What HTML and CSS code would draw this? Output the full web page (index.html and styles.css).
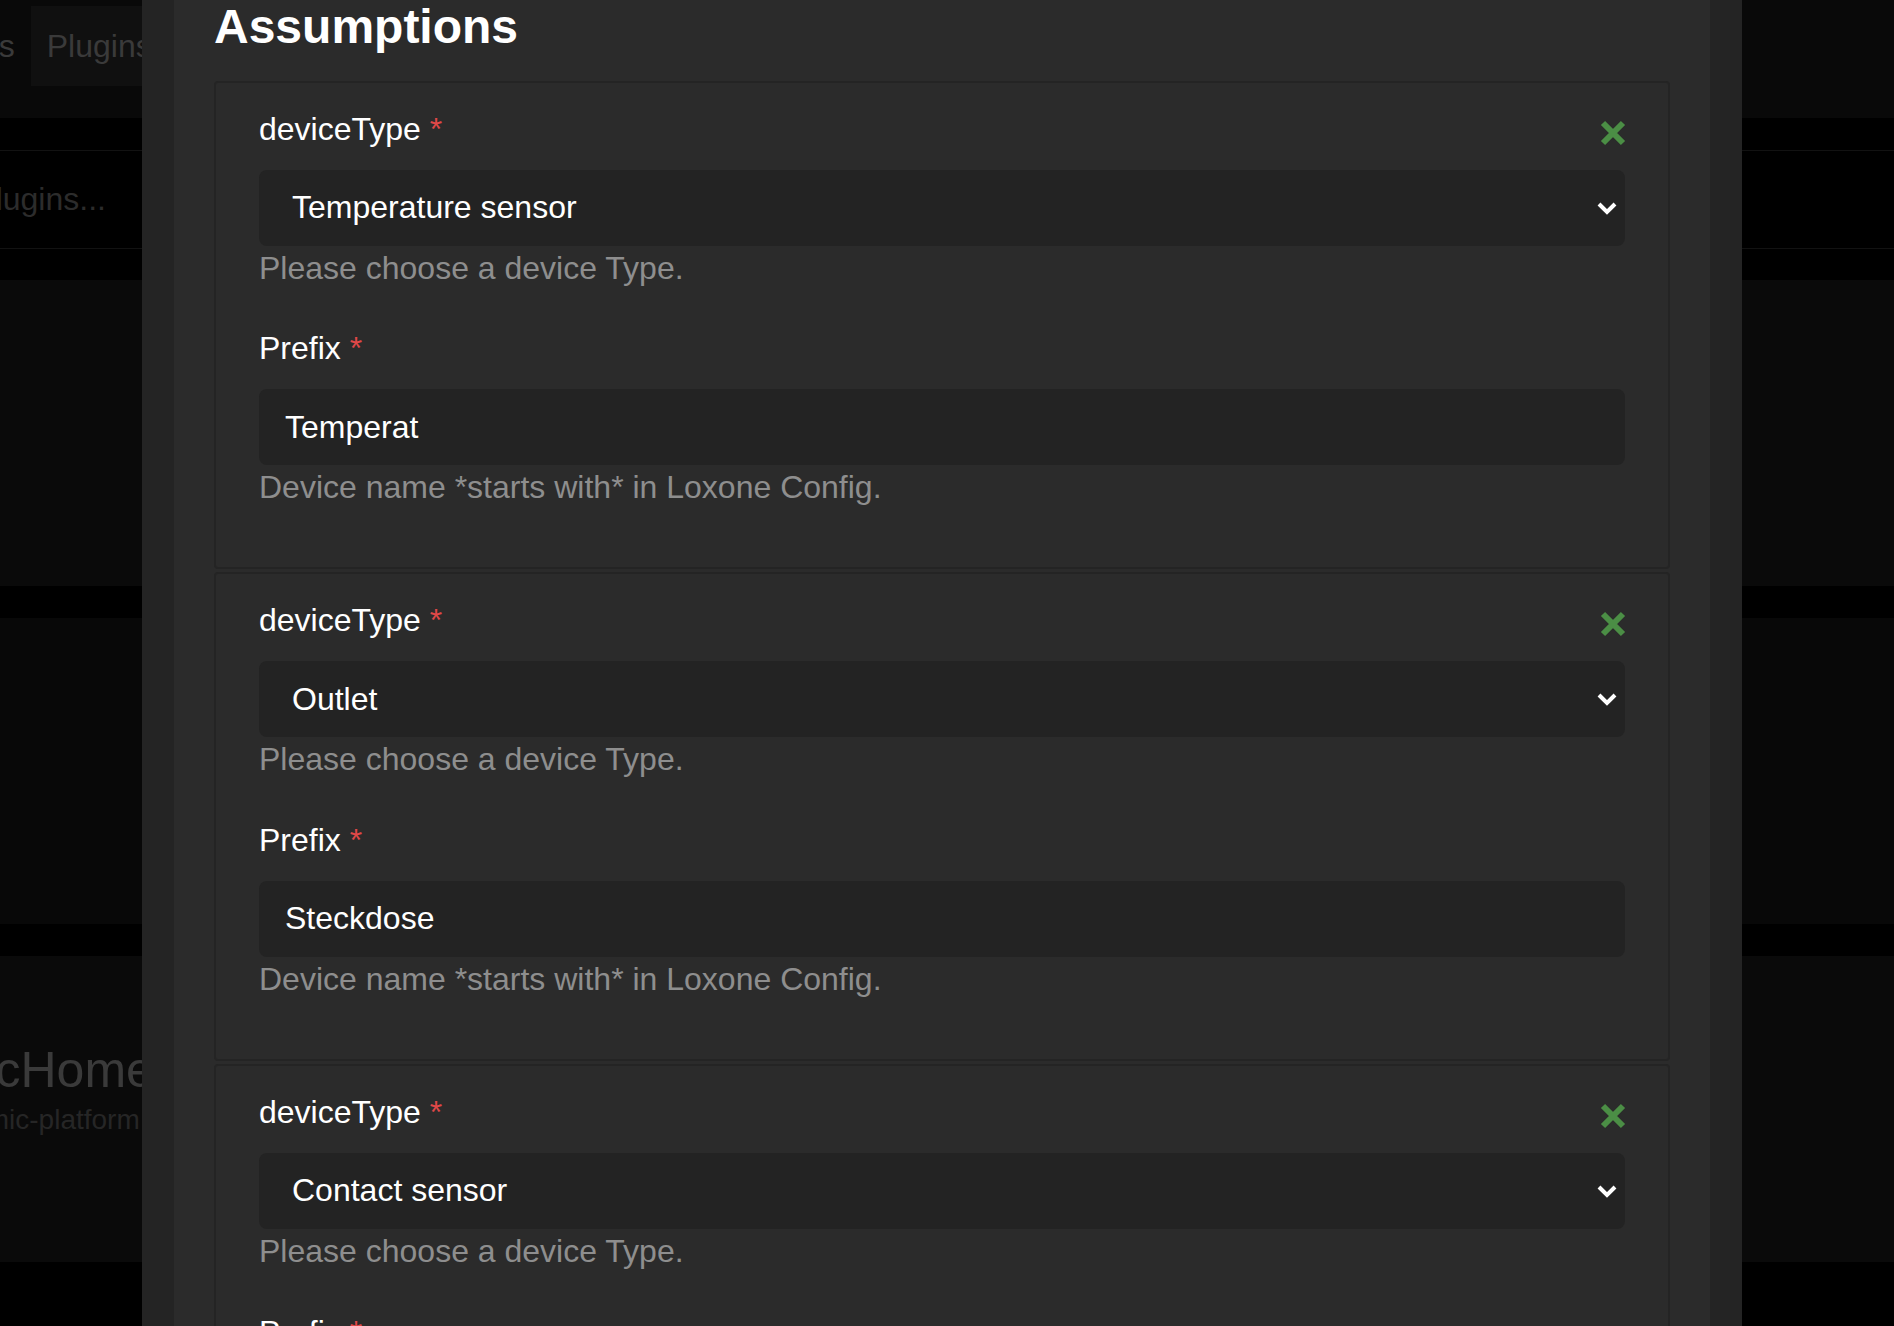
FILE: index.html
```html
<!DOCTYPE html>
<html lang="en">
<head>
<meta charset="utf-8">
<title>Assumptions</title>
<link rel="stylesheet" href="styles.css">
</head>
<body>
<div class="page">
  <nav class="topnav">
    <div class="nav-tabs">
      <span class="nav-link">Status</span>
      <span class="nav-link active">Plugins</span>
      <span class="nav-link">Config</span>
    </div>
  </nav>
  <div class="search-row">Search Plugins...</div>
  <div class="plugin-list">
    <div class="plugin-card"></div>
    <div class="plugin-card dim"></div>
    <div class="plugin-card">
      <div class="plugin-name">DynamicHome</div>
      <div class="plugin-pkg">dynamic-platform</div>
    </div>
  </div>
</div>

<div class="modal">
  <div class="modal-panel">
    <h4 class="title">Assumptions</h4>

    <div class="item-card">
      <div class="field">
        <div class="field-head">
          <label class="req">deviceType</label>
          <svg class="remove" width="26" height="26" viewBox="0 0 26 26"><path d="M3 3 L23 23 M23 3 L3 23" stroke="#4b8e45" stroke-width="6" fill="none"/></svg>
        </div>
        <div class="select"><span>Temperature sensor</span><svg class="chev" width="20" height="14" viewBox="0 0 20 14"><polyline points="2,3 10,11 18,3" fill="none" stroke="#fff" stroke-width="4"/></svg></div>
        <div class="help">Please choose a device Type.</div>
      </div>
      <div class="field">
        <div class="field-head"><label class="req">Prefix</label></div>
        <div class="input">Temperat</div>
        <div class="help">Device name *starts with* in Loxone Config.</div>
      </div>
    </div>

    <div class="item-card">
      <div class="field">
        <div class="field-head">
          <label class="req">deviceType</label>
          <svg class="remove" width="26" height="26" viewBox="0 0 26 26"><path d="M3 3 L23 23 M23 3 L3 23" stroke="#4b8e45" stroke-width="6" fill="none"/></svg>
        </div>
        <div class="select"><span>Outlet</span><svg class="chev" width="20" height="14" viewBox="0 0 20 14"><polyline points="2,3 10,11 18,3" fill="none" stroke="#fff" stroke-width="4"/></svg></div>
        <div class="help">Please choose a device Type.</div>
      </div>
      <div class="field">
        <div class="field-head"><label class="req">Prefix</label></div>
        <div class="input">Steckdose</div>
        <div class="help">Device name *starts with* in Loxone Config.</div>
      </div>
    </div>

    <div class="item-card">
      <div class="field">
        <div class="field-head">
          <label class="req">deviceType</label>
          <svg class="remove" width="26" height="26" viewBox="0 0 26 26"><path d="M3 3 L23 23 M23 3 L3 23" stroke="#4b8e45" stroke-width="6" fill="none"/></svg>
        </div>
        <div class="select"><span>Contact sensor</span><svg class="chev" width="20" height="14" viewBox="0 0 20 14"><polyline points="2,3 10,11 18,3" fill="none" stroke="#fff" stroke-width="4"/></svg></div>
        <div class="help">Please choose a device Type.</div>
      </div>
      <div class="field">
        <div class="field-head"><label class="req">Prefix</label></div>
        <div class="input">Kontakt</div>
        <div class="help">Device name *starts with* in Loxone Config.</div>
      </div>
    </div>
  </div>
</div>
</body>
</html>
```
FILE: styles.css
```css
html, body {
  margin: 0;
  padding: 0;
}
body {
  width: 1894px;
  height: 1326px;
  position: relative;
  overflow: hidden;
  background: #000;
  font-family: "Liberation Sans", Arial, Helvetica, sans-serif;
}

/* background page */
.page {
  width: 100%;
  height: 100%;
}
.topnav {
  height: 118px;
  background: #090909;
}
.nav-tabs {
  display: flex;
  margin-left: -92px;
  padding-top: 6px;
}
.nav-link {
  font-size: 32px;
  line-height: 48px;
  padding: 16px 16px 16px;
  color: #3a3a3a;
  white-space: nowrap;
}
.nav-link.active {
  background: #101010;
}
.search-row {
  margin-top: 32px;
  height: 97px;
  line-height: 97px;
  border-top: 1px solid #121212;
  border-bottom: 1px solid #121212;
  font-size: 32px;
  color: #2c2c2c;
  white-space: nowrap;
  text-indent: -136px;
}
.plugin-list {
  padding-top: 31px;
  display: flex;
  flex-direction: column;
  gap: 32px;
}
.plugin-card {
  height: 306px;
  background: #0a0a0a;
  box-sizing: border-box;
  padding-top: 84px;
  white-space: nowrap;
}
.plugin-card.dim {
  background: #080808;
}
.plugin-name {
  font-size: 50px;
  line-height: 60px;
  color: #3a3a3a;
  text-indent: -174px;
}
.plugin-pkg {
  font-size: 28px;
  line-height: 36px;
  margin-top: 2px;
  color: #262626;
  text-indent: -75px;
}

/* modal overlay */
.modal {
  position: absolute;
  top: 0;
  left: 142px;
  width: 1600px;
  height: 1326px;
  box-sizing: border-box;
  padding: 0 32px;
  background: #242424;
}
.modal-panel {
  height: 100%;
  box-sizing: border-box;
  padding: 0 40px;
  background: #2b2b2b;
  overflow: hidden;
}
.title {
  margin: -2px 0 25px;
  font-size: 48px;
  line-height: 57.6px;
  font-weight: bold;
  color: #fff;
}
.item-card {
  border: 2px solid #242424;
  border-radius: 4px;
  padding: 22px 43px 23px;
  margin-bottom: 3px;
}
.field {
  margin-bottom: 34px;
}
.field-head {
  display: flex;
  justify-content: space-between;
  align-items: flex-start;
  margin-bottom: 17px;
}
.field-head label {
  font-size: 32px;
  line-height: 48px;
  color: #fff;
}
.req::after {
  content: " *";
  color: #e04848;
}
.remove {
  display: block;
  margin-top: 15px;
  margin-right: -1px;
}
.select,
.input {
  height: 76px;
  box-sizing: border-box;
  display: flex;
  align-items: center;
  background: #232323;
  border-radius: 8px;
  font-size: 32px;
  color: #fff;
  padding: 0 26px;
  white-space: nowrap;
}
.select {
  justify-content: space-between;
  padding-left: 33px;
  padding-right: 8px;
}
.chev {
  display: block;
}
.help {
  font-size: 32px;
  line-height: 44.8px;
  color: #8e8e8e;
}
```
